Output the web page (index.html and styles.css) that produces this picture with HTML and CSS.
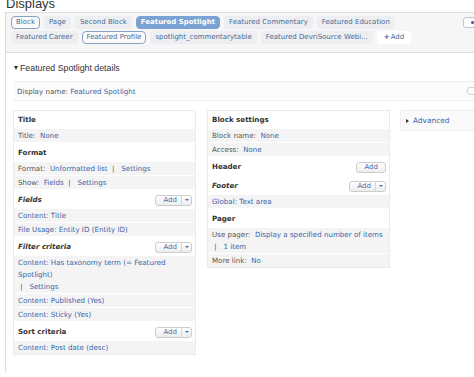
FILE: index.html
```html
<!DOCTYPE html>
<html>
<head>
<meta charset="utf-8">
<title>Displays</title>
<link rel="stylesheet" href="styles.css">
</head>
<body>
<div class="page">
  <h1 class="heading">Displays</h1>
  <div class="tabs">
    <div class="tab-rows">
      <div class="tab-row">
        <span class="tab outlined">Block</span>
        <span class="tab">Page</span>
        <span class="tab">Second Block</span>
        <span class="tab active">Featured Spotlight</span>
        <span class="tab">Featured Commentary</span>
        <span class="tab">Featured Education</span>
      </div>
      <div class="tab-row">
        <span class="tab">Featured Career</span>
        <span class="tab outlined">Featured Profile</span>
        <span class="tab">spotlight_commentarytable</span>
        <span class="tab">Featured DevriSource Webi...</span>
        <span class="tab add"><b class="plus">+</b>Add</span>
      </div>
    </div>
    <span class="corner-btn"><span class="dot"></span></span>
  </div>

  <div class="details">
    <div class="details-title"><span class="caret-down"></span>Featured Spotlight details</div>
    <div class="display-name">
      <span class="label">Display name:</span>&nbsp;<a class="link">Featured Spotlight</a>
      <span class="dn-btn"></span>
    </div>

    <div class="columns">
      <div class="col col-main">
        <div class="hdr first">Title</div>
        <div class="item">Title:&nbsp; <a class="link">None</a></div>
        <div class="hdr">Format</div>
        <div class="item">Format:&nbsp; <a class="link">Unformatted list</a>&nbsp; <span class="pipe">|</span>&nbsp;&nbsp; <a class="link">Settings</a></div>
        <div class="item">Show:&nbsp; <a class="link">Fields</a>&nbsp; <span class="pipe">|</span>&nbsp;&nbsp; <a class="link">Settings</a></div>
        <div class="hdr"><em>Fields</em><span class="btn"><span class="btn-main">Add</span><span class="btn-drop"><span class="caret-sm"></span></span></span></div>
        <div class="item"><a class="link">Content: Title</a></div>
        <div class="item"><a class="link">File Usage: Entity ID (Entity ID)</a></div>
        <div class="hdr"><em>Filter criteria</em><span class="btn"><span class="btn-main">Add</span><span class="btn-drop"><span class="caret-sm"></span></span></span></div>
        <div class="item"><a class="link">Content: Has taxonomy term (= Featured Spotlight)</a><br>&nbsp;<span class="pipe">|</span>&nbsp;&nbsp; <a class="link">Settings</a></div>
        <div class="item"><a class="link">Content: Published (Yes)</a></div>
        <div class="item"><a class="link">Content: Sticky (Yes)</a></div>
        <div class="hdr">Sort criteria<span class="btn"><span class="btn-main">Add</span><span class="btn-drop"><span class="caret-sm"></span></span></span></div>
        <div class="item"><a class="link">Content: Post date (desc)</a></div>
      </div>

      <div class="col col-mid">
        <div class="hdr first">Block settings</div>
        <div class="item">Block name:&nbsp; <a class="link">None</a></div>
        <div class="item">Access:&nbsp; <a class="link">None</a></div>
        <div class="hdr">Header<span class="btn"><span class="btn-main solo">Add</span></span></div>
        <div class="hdr"><em>Footer</em><span class="btn"><span class="btn-main">Add</span><span class="btn-drop"><span class="caret-sm"></span></span></span></div>
        <div class="item"><a class="link">Global: Text area</a></div>
        <div class="hdr">Pager</div>
        <div class="item">Use pager:&nbsp; <a class="link">Display a specified number of items</a><br>&nbsp;<span class="pipe">|</span>&nbsp;&nbsp; <a class="link">1 item</a></div>
        <div class="item">More link:&nbsp; <a class="link">No</a></div>
      </div>

      <div class="col col-side">
        <div class="advanced"><span class="caret-right"></span><a class="link">Advanced</a></div>
      </div>
    </div>
  </div>
</div>
</body>
</html>
```

FILE: styles.css
```css
* { box-sizing: border-box; }
html, body { margin: 0; padding: 0; }
body {
  width: 474px;
  height: 377px;
  overflow: hidden;
  background: #fff;
  font-family: "DejaVu Sans", Verdana, sans-serif;
  font-size: 7.1px;
  color: #555;
}
.page { width: 540px; }

.heading {
  font-family: "Liberation Sans", Arial, sans-serif;
  font-size: 13px;
  font-weight: normal;
  color: #333;
  margin: -2px 0 0 0;
  padding-left: 6px;
  height: 14px;
  line-height: 12px;
}

.tabs {
  display: flex;
  align-items: flex-start;
  margin-left: 5px;
  width: 530px;
  height: 41px;
  border: 1px solid #dcdcdc;
  background: #f6f6f6;
  padding: 3px 0 0 5px;
}
.tab-rows {
  flex: 0 0 452px;
  width: 452px;
  display: flex;
  flex-direction: column;
  gap: 2px;
}
.tab-row { display: flex; gap: 4px; }
.tab {
  height: 13px;
  line-height: 11px;
  padding: 0 4px;
  border: 1px solid transparent;
  border-radius: 4px;
  background: #eceef1;
  color: #4d6a93;
  font-size: 7px;
  white-space: nowrap;
}
.tab.outlined { border-color: #88a2c6; background: #fafafa; }
.tab.active {
  background: #7aa3d5;
  border-color: #7aa3d5;
  color: #fff;
  font-weight: bold;
}
.tab.add { background: #fff; padding: 0 6px; }
.plus { color: #3d5f96; margin-right: 1px; }

.corner-btn {
  flex: 0 0 60px;
  display: flex;
  align-items: center;
  margin-top: 1px;
  height: 11px;
  padding-left: 7px;
  border: 1px solid #b9c5d6;
  border-radius: 3px;
  background: #fff;
}
.dot {
  width: 3px; height: 3px;
  border-radius: 50%;
  background: #3d5f96;
}

.details {
  margin-left: 5px;
  border-left: 1px solid #dcdcdc;
  padding: 9px 0 0 7px;
  height: 319px;
}
.details-title {
  font-family: "Liberation Sans", Arial, sans-serif;
  font-size: 8.8px;
  color: #333;
  line-height: 12px;
  height: 12px;
  padding-left: 1px;
  display: flex;
  align-items: center;
}
.caret-down {
  width: 0; height: 0;
  border-left: 2.5px solid transparent;
  border-right: 2.5px solid transparent;
  border-top: 4px solid #333;
  margin-right: 2px;
}

.display-name {
  margin-top: 7px;
  width: 480px;
  height: 20px;
  display: flex;
  align-items: center;
  background: #fbfbfb;
  border-top: 1px solid #efefef;
  border-bottom: 1px solid #efefef;
  padding-left: 4px;
}
.dn-btn {
  margin-left: auto;
  margin-right: 14px;
  width: 12px;
  height: 8px;
  border: 1px solid #cfcfcf;
  border-radius: 3px;
  background: #fff;
}

.link { color: #3b64a9; text-decoration: none; }
.pipe { color: #555; }

.columns {
  display: flex;
  align-items: flex-start;
  margin-top: 9px;
}
.col {
  border: 1px solid #ebebeb;
  background: #fff;
}
.col-main { width: 183px; margin-right: 11px; }
.col-mid { width: 183px; margin-right: 10px; }
.col-side { width: 100px; background: #fafafa; border-color: #f0f0f0; }

.hdr {
  display: flex;
  align-items: center;
  min-height: 19px;
  padding: 5px 3px 2px 4px;
  line-height: 12px;
  font-weight: bold;
  color: #333;
  background: #fff;
}
.hdr.first { min-height: 17px; padding-top: 3px; }
.hdr em { font-style: italic; }

.item {
  padding: 1px 4px 0 4px;
  line-height: 12px;
  min-height: 14px;
  background: #f4f4f4;
  border-top: 1px solid #fff;
  color: #555;
}

.btn {
  margin-left: auto;
  display: flex;
  height: 11px;
  border: 1px solid #cdcdcd;
  border-radius: 3px;
  background: linear-gradient(#ffffff, #ededed);
  font-size: 7px;
  line-height: 9px;
  font-weight: normal;
}
.btn-main { padding: 0 4px 0 7px; color: #4a6ea6; }
.btn-main.solo { padding: 0 7px; }
.btn-drop {
  width: 10px;
  border-left: 1px solid #d8d8d8;
  display: flex;
  align-items: center;
  justify-content: center;
}
.caret-sm {
  width: 0; height: 0;
  border-left: 2px solid transparent;
  border-right: 2px solid transparent;
  border-top: 2.5px solid #4a6ea6;
}

.advanced {
  height: 19px;
  display: flex;
  align-items: center;
  padding-left: 5px;
  font-size: 7.4px;
}
.caret-right {
  width: 0; height: 0;
  border-top: 2.5px solid transparent;
  border-bottom: 2.5px solid transparent;
  border-left: 3px solid #333;
  margin-right: 4px;
}
```
